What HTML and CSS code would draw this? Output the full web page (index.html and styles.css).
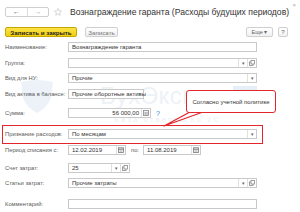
FILE: index.html
```html
<!DOCTYPE html>
<html lang="ru">
<head>
<meta charset="utf-8">
<link rel="stylesheet" href="styles.css">
</head>
<body>
<div class="window">
  <div class="watermark">
    <svg class="wm-shield" width="40" height="34" viewBox="0 0 40 34"><path d="M4 2 Q20 -2 36 2 L34 18 Q30 28 20 33 Q10 28 6 18 Z" fill="#edf2f8"/></svg>
    <span class="wm-title">БухЭксперт</span>
    <span class="wm-box"></span>
    <span class="wm-sub">База ответов по 1С</span>
  </div>

  <div class="header">
    <div class="nav">
      <span class="nav-btn">&#8592;</span><span class="nav-btn">&#8594;</span>
    </div>
    <svg class="star" width="8" height="8" viewBox="0 0 10 10"><path d="M5 0.6 L6.3 3.6 L9.5 3.8 L7 5.9 L7.8 9.2 L5 7.4 L2.2 9.2 L3 5.9 L0.5 3.8 L3.7 3.6 Z" fill="none" stroke="#c2c2c2" stroke-width="0.8"/></svg>
    <span class="title">Вознаграждение гаранта (Расходы будущих периодов)</span>
    <span class="close">×</span>
  </div>

  <div class="toolbar">
    <span class="btn btn-primary">Записать и закрыть</span>
    <span class="btn btn-plain">Записать</span>
    <span class="spacer"></span>
    <span class="btn btn-small">Еще ▾</span>
    <span class="btn btn-small btn-q">?</span>
  </div>

  <div class="form">
    <div class="row r1">
      <span class="label">Наименование:</span>
      <span class="input w-full">Вознаграждение гаранта</span>
    </div>
    <div class="row r2">
      <span class="label">Группа:</span>
      <span class="input w-full has-btns"><span class="val"></span><span class="seg dd">▾</span><span class="seg op"><svg width="6" height="6" viewBox="0 0 6 6"><rect x="0.5" y="2" width="3.5" height="3.5" fill="none" stroke="#888" stroke-width="0.8"/><rect x="2" y="0.5" width="3.5" height="3.5" fill="#fff" stroke="#888" stroke-width="0.8"/></svg></span></span>
    </div>
    <div class="row r3">
      <span class="label">Вид для НУ:</span>
      <span class="input w-full has-btns"><span class="val">Прочие</span><span class="seg dd">▾</span></span>
    </div>
    <div class="row r4">
      <span class="label">Вид актива в балансе:</span>
      <span class="input w-mid">Прочие оборотные активы</span>
    </div>
    <div class="row r5">
      <span class="label">Сумма:</span>
      <span class="input w-sum has-btns"><span class="val num">56 000,00</span><span class="seg cal"><svg width="6" height="6" viewBox="0 0 6 6"><rect x="0.5" y="0.5" width="5" height="5" fill="none" stroke="#888" stroke-width="0.8"/><path d="M0.5 2.3 H5.5 M0.5 3.9 H5.5 M2.3 2.3 V5.5 M3.9 2.3 V5.5" stroke="#888" stroke-width="0.5"/></svg></span></span>
      <span class="help">?</span>
    </div>
    <div class="row r6 highlight">
      <span class="label">Признание расходов:</span>
      <span class="input w-full has-btns"><span class="val">По месяцам</span><span class="seg dd">▾</span></span>
    </div>
    <div class="row r7">
      <span class="label">Период списания с:</span>
      <span class="input w-date has-btns"><span class="val">12.02.2019</span><span class="seg cal"><svg width="6" height="6" viewBox="0 0 6 6"><rect x="0.5" y="0.8" width="5" height="4.7" fill="none" stroke="#777" stroke-width="0.8"/><path d="M0.5 2.2 H5.5" stroke="#777" stroke-width="1"/><path d="M1.5 3.3 H4.5 M1.5 4.4 H4.5" stroke="#999" stroke-width="0.5"/></svg></span></span>
      <span class="po">по:</span>
      <span class="input w-date has-btns"><span class="val">11.08.2019</span><span class="seg cal"><svg width="6" height="6" viewBox="0 0 6 6"><rect x="0.5" y="0.8" width="5" height="4.7" fill="none" stroke="#777" stroke-width="0.8"/><path d="M0.5 2.2 H5.5" stroke="#777" stroke-width="1"/><path d="M1.5 3.3 H4.5 M1.5 4.4 H4.5" stroke="#999" stroke-width="0.5"/></svg></span></span>
    </div>
    <div class="row r8">
      <span class="label">Счет затрат:</span>
      <span class="input w-acc has-btns"><span class="val">25</span><span class="seg dd">▾</span><span class="seg op"><svg width="6" height="6" viewBox="0 0 6 6"><rect x="0.5" y="2" width="3.5" height="3.5" fill="none" stroke="#888" stroke-width="0.8"/><rect x="2" y="0.5" width="3.5" height="3.5" fill="#fff" stroke="#888" stroke-width="0.8"/></svg></span></span>
    </div>
    <div class="row r9">
      <span class="label">Статьи затрат:</span>
      <span class="input w-full has-btns"><span class="val">Прочие затраты</span><span class="seg dd">▾</span><span class="seg op"><svg width="6" height="6" viewBox="0 0 6 6"><rect x="0.5" y="2" width="3.5" height="3.5" fill="none" stroke="#888" stroke-width="0.8"/><rect x="2" y="0.5" width="3.5" height="3.5" fill="#fff" stroke="#888" stroke-width="0.8"/></svg></span></span>
    </div>
    <div class="row r10">
      <span class="label">Комментарий:</span>
      <span class="input w-full"></span>
    </div>
  </div>

  <svg class="tail" width="300" height="212" viewBox="0 0 300 212">
    <path d="M190 112 L164 126 L203 112" fill="#fff" stroke="#e3262b" stroke-width="1.3" stroke-linejoin="round"/>
  </svg>
  <div class="callout">Согласно учетной политике</div>
</div>
</body>
</html>
```

FILE: styles.css
```css
* { box-sizing: border-box; }
html, body { margin: 0; padding: 0; background: #fff; }
body { font-family: "Liberation Sans", Arial, sans-serif; color: #333; }

.window {
  position: relative;
  width: 300px;
  height: 212px;
  overflow: hidden;
  background: #fff;
}

/* watermark */
.watermark { position: absolute; left: 0; top: 0; width: 300px; height: 212px; pointer-events: none; }
.wm-shield { position: absolute; left: 17px; top: 80px; }
.wm-title { position: absolute; left: 100px; top: 82px; font-size: 24px; color: #eef2f6; letter-spacing: 0.5px; }
.wm-box { position: absolute; left: 233px; top: 86px; width: 24px; height: 15px; background: #e6eef8; }
.wm-sub { position: absolute; left: 114px; top: 115px; font-size: 7.5px; letter-spacing: 2.2px; color: #eaeef2; }

/* header */
.header {
  position: relative;
  display: flex;
  align-items: center;
  height: 17px;
  padding: 7px 0 0 5px;
}
.nav { display: flex; border: 1px solid #cfcfcf; border-radius: 2px; height: 10px; }
.nav-btn {
  width: 21px; height: 8px; display: flex; align-items: center; justify-content: center;
  font-size: 7px; color: #555; line-height: 8px;
}
.nav-btn + .nav-btn { border-left: 1px solid #dcdcdc; color: #aaa; }
.star { margin-left: 5px; }
.title { margin-left: 8px; font-size: 8.6px; color: #333; white-space: nowrap; }
.close { position: absolute; right: 4px; top: 2px; font-size: 6px; color: #aaa; }

/* toolbar */
.toolbar {
  position: relative;
  display: flex;
  align-items: center;
  height: 10px;
  margin-top: 10px;
  padding: 0 12px 0 5px;
}
.btn {
  height: 10px; display: flex; align-items: center; justify-content: center;
  font-size: 6.2px; border-radius: 2px; white-space: nowrap;
}
.btn-primary {
  width: 72px;
  background: linear-gradient(#fbe44a, #f0cf0c);
  border: 1px solid #c7a600;
  color: #222; font-weight: bold;
}
.btn-plain {
  width: 33px; margin-left: 8px;
  background: linear-gradient(#fff, #efefef);
  border: 1px solid #cfcfcf; color: #777;
}
.spacer { flex: 1; }
.btn-small {
  width: 27px; background: linear-gradient(#fff, #f1f1f1);
  border: 1px solid #cfcfcf; color: #666; font-size: 5.6px;
}
.btn-q { width: 10px; margin-left: 5px; font-size: 6px; }

/* form */
.form { position: relative; display: flex; flex-direction: column; }
.row { display: flex; align-items: center; height: 10px; position: relative; }
.r1 { margin-top: 5px; }
.r2 { margin-top: 6px; }
.r3 { margin-top: 5px; }
.r4 { margin-top: 6px; }
.r5 { margin-top: 9px; }
.r6 { margin-top: 11px; }
.r7 { margin-top: 6px; }
.r8 { margin-top: 8px; }
.r9 { margin-top: 5px; }
.r10 { margin-top: 11px; }

.label { width: 68px; padding-left: 5px; font-size: 5.8px; color: #5a5a5a; white-space: nowrap; }
.input {
  height: 10px; display: flex; align-items: center;
  border: 1px solid #c9c9c9; background: #fff;
  font-size: 6px; color: #333; padding: 0 3px; white-space: nowrap;
}
.has-btns { padding-right: 0; }
.val { flex: 1; }
.num { text-align: right; padding-right: 2px; }
.seg {
  width: 9px; height: 8px; display: flex; align-items: center; justify-content: center;
  border-left: 1px solid #e0e0e0; font-size: 5px; color: #666;
}
.w-full { width: 189px; }
.w-mid { width: 76px; }
.w-sum { width: 83px; }
.w-date { width: 58px; }
.w-acc { width: 62px; }
.help { margin-left: 5px; font-size: 7px; color: #3a7fd0; }
.po { margin: 0 4px 0 5px; font-size: 5.8px; color: #5a5a5a; }

.highlight::before {
  content: "";
  position: absolute;
  left: 2px; top: -4px;
  width: 259px; height: 17px;
  border: 1.3px solid #e3262b;
}

/* callout */
.tail { position: absolute; left: 0; top: 0; }
.callout {
  position: absolute;
  left: 186px; top: 90px;
  width: 90px; height: 23px;
  border: 1.3px solid #e3262b; border-radius: 3px;
  background: #fff;
  display: flex; align-items: center; justify-content: center;
  font-size: 6px; color: #333; white-space: nowrap;
}
```
